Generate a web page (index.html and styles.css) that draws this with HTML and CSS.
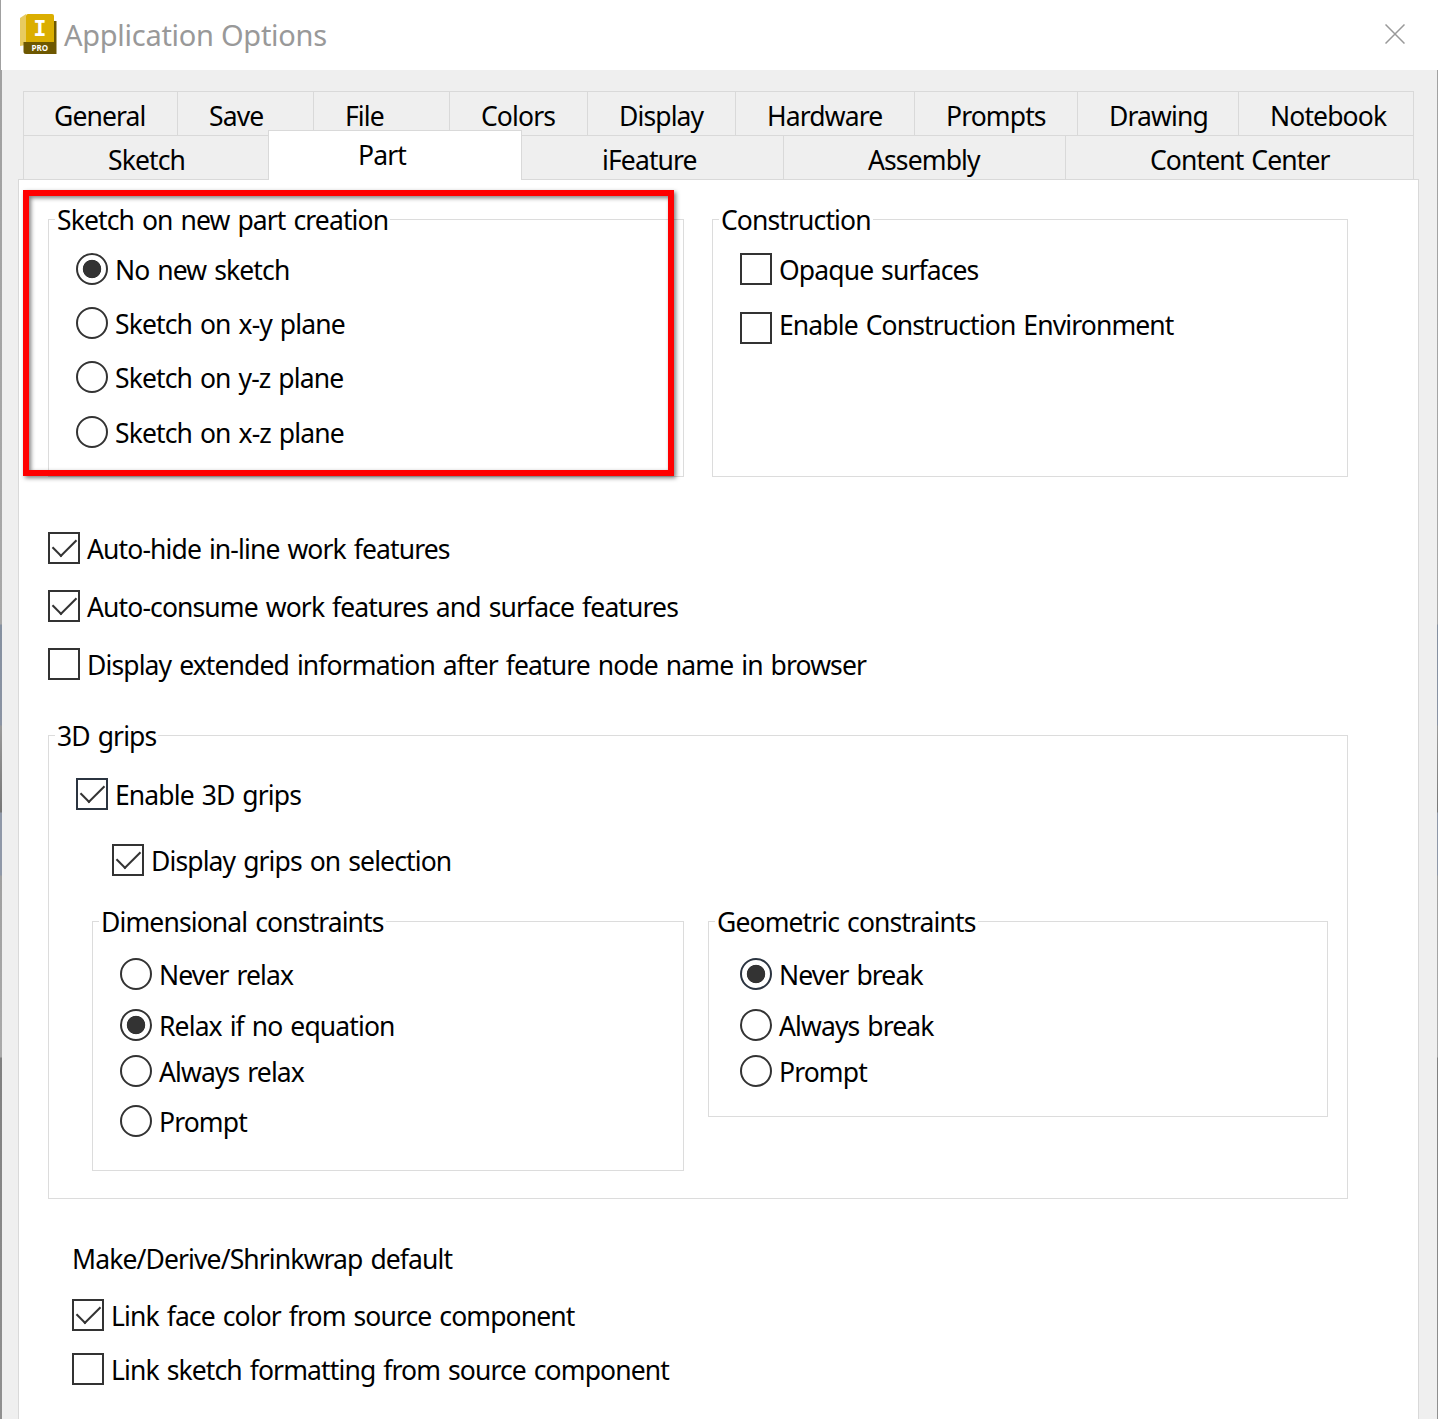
FILE: index.html
```html
<!DOCTYPE html>
<html lang="en">
<head>
	<meta charset="UTF-8">
	<meta name="viewport" content="width=device-width, initial-scale=1.0">
	<title>Application Options</title>
	<link rel="stylesheet" href="styles.css">
</head>
<body>
	<div class="window">
		<div class="titlebar">
			<svg class="logo" width="38" height="42" viewBox="0 0 38 42">
				<path d="M1 5 L7 1 V32 L1 33 Z" fill="#e8cb60"/>
				<path d="M4.500 29 H35 V8 H37.500 V41 H7 Q4.500 41 4.500 38.500 Z" fill="#6d5700"/>
				<path d="M7 3 Q7 1 9 1 H33 Q35 1 35 3 V29 H7 Z" fill="#dbae00"/>
				<text class="logo-letter" x="20.800" y="23" text-anchor="middle">I</text>
				<text class="logo-pro" x="20.800" y="37.800" text-anchor="middle">PRO</text>
			</svg>
			<span class="title">Application Options</span>
			<svg class="btn-close" width="20" height="20" viewBox="0 0 20 20">
				<path d="M0.500 0.500 L19.500 19.500 M19.500 0.500 L0.500 19.500"/>
			</svg>
		</div>

		<div class="tabs">
			<ul class="tab-row first">
				<li class="tab">General</li>
				<li class="tab">Save</li>
				<li class="tab">File</li>
				<li class="tab">Colors</li>
				<li class="tab">Display</li>
				<li class="tab">Hardware</li>
				<li class="tab">Prompts</li>
				<li class="tab">Drawing</li>
				<li class="tab">Notebook</li>
			</ul>
			<ul class="tab-row second">
				<li class="tab">Sketch</li>
				<li class="tab selected">Part</li>
				<li class="tab ifeature">iFeature</li>
				<li class="tab">Assembly</li>
				<li class="tab">Content Center</li>
			</ul>
		</div>

		<div class="panel">
			<div class="highlight"></div>
			<div class="columns top">
				<fieldset class="group">
					<legend>Sketch on new part creation</legend>
					<label class="option"><input type="radio" name="sketch" checked><span>No new sketch</span></label>
					<label class="option"><input type="radio" name="sketch"><span>Sketch on x-y plane</span></label>
					<label class="option"><input type="radio" name="sketch"><span>Sketch on y-z plane</span></label>
					<label class="option last"><input type="radio" name="sketch"><span>Sketch on x-z plane</span></label>
				</fieldset>
				<fieldset class="group construction">
					<legend>Construction</legend>
					<label class="option"><input type="checkbox"><span>Opaque surfaces</span></label>
					<label class="option raised"><input type="checkbox"><span>Enable Construction Environment</span></label>
				</fieldset>
			</div>

			<div class="features">
				<label class="option"><input type="checkbox" checked><span>Auto-hide in-line work features</span></label>
				<label class="option"><input type="checkbox" checked><span>Auto-consume work features and surface features</span></label>
				<label class="option"><input type="checkbox"><span>Display extended information after feature node name in browser</span></label>
			</div>

			<fieldset class="group grips">
				<legend>3D grips</legend>
				<label class="option"><input type="checkbox" class="focus" checked><span>Enable 3D grips</span></label>
				<label class="option sub"><input type="checkbox" checked><span>Display grips on selection</span></label>
				<div class="columns constraints">
					<fieldset class="group dimensional">
						<legend>Dimensional constraints</legend>
						<label class="option"><input type="radio" name="dim"><span>Never relax</span></label>
						<label class="option"><input type="radio" name="dim" checked><span>Relax if no equation</span></label>
						<label class="option"><input type="radio" name="dim"><span>Always relax</span></label>
						<label class="option"><input type="radio" name="dim"><span>Prompt</span></label>
					</fieldset>
					<fieldset class="group geometric">
						<legend>Geometric constraints</legend>
						<label class="option"><input type="radio" name="geo" class="focus" checked><span>Never break</span></label>
						<label class="option"><input type="radio" name="geo"><span>Always break</span></label>
						<label class="option"><input type="radio" name="geo"><span>Prompt</span></label>
					</fieldset>
				</div>
			</fieldset>

			<div class="derive">
				<p class="derive-title">Make/Derive/Shrinkwrap default</p>
				<label class="option"><input type="checkbox" checked><span>Link face color from source component</span></label>
				<label class="option"><input type="checkbox"><span>Link sketch formatting from source component</span></label>
			</div>
		</div>
	</div>
</body>
</html>
```
FILE: styles.css
```css
*{ box-sizing: border-box;}
body{
	margin: 0; height: 1419px; overflow: hidden; color: #000;
	font-family: "Noto Sans", sans-serif; font-size: 26.5px; line-height: 33px;
	letter-spacing: -.88px; word-spacing: 1.9px;
	/* strip of desktop showing beside the window */
	background: linear-gradient(#a0a0a0 0, #a8a8a8 624px, #8590a0 625px, #8a93a3 725px, #999 726px, #777 812px, #8f98a8 813px, #8f98a8 875px, #a0a0a0 876px, #aaa 1057px, #808080 1058px, #909090 1419px);
}
ul, p{ margin: 0; padding: 0; list-style: none;}

.window{
	height: 1419px; margin: 0 1px 0 2px; background: #efefef;
}
.titlebar{
	display: flex; align-items: center; height: 70px; margin: 0 -1px;
	padding: 0 33px 2px 18px; background: #fff;
}
.logo{ margin-right: 7px; letter-spacing: 0;}
.logo-letter{ font: bold 22px "DejaVu Sans Mono", monospace; fill: #fff;}
.logo-pro{ font: bold 8px "Open Sans", sans-serif; fill: #fff;}
.title{ flex: 1; font-size: 29px; letter-spacing: -.28px; word-spacing: 0; color: #999;}
.btn-close{ fill: none; stroke: #999; stroke-width: 1.500;}

/* tabs */
.tabs{ margin: 21px 23px 0 21px;}
.tab-row{ display: grid; height: 44px; border-left: 1px solid #d9d9d9;}
.first{ grid-template-columns: 154px 136px 136px 138px 148px 179px 163px 161px 1fr;}
.second{ grid-template-columns: 245px 253px 262px 282px 1fr;}
.tab{
	padding: 6px 0 0 31px; line-height: 37px; white-space: nowrap;
	border-top: 1px solid #d9d9d9; border-right: 1px solid #d9d9d9;
}
.first .tab:first-child{ padding-left: 30px;}
.second .tab{ padding-left: 84px;}
.second .ifeature{ padding-left: 80px;}
.second .selected{
	z-index: 1; margin: -5px 0 -1px -1px; padding: 6px 0 0 89px;
	border-left: 1px solid #d9d9d9; background: #fff;
}

.panel{
	position: relative; height: 1240px; margin: 0 18px 0 16px; padding: 23px 70px 0 29px;
	border: 1px solid #d9d9d9; border-bottom: 0; background: #fff;
}
.highlight{
	position: absolute; left: 4px; top: 10px; width: 651px; height: 286px;
	border: 6px solid #f00; filter: drop-shadow(2px 2px 2px rgba(0,0,0,.5));
}

.columns{ display: flex; align-items: flex-start;}
.top{ gap: 28px;}
.group{
	min-width: 0; margin: 0; padding: 17px 0 0 27px; border: 1px solid #dcdcdc;
}
.top .group{ width: 636px; height: 274px;}
.group legend{
	height: 33px; margin-left: -21px; padding: 0 2px; line-height: 35px; white-space: nowrap;
}

.option{
	display: flex; align-items: center; gap: 7px; height: 32px; margin-bottom: 22px; white-space: nowrap;
}
.option span{ padding-top: 2px;}
.option.last{ margin-top: 23px;}
.construction .option{ margin-bottom: 27px;}
.raised span{ margin-top: -8px;}

input{
	appearance: none; flex: none; width: 32px; height: 32px; margin: 0;
	border: 2px solid #333; background: #fff;
}
input[type=radio]{ border-radius: 50%;}
input[type=radio]:checked{ background: radial-gradient(circle, #333 8.800px, #fff 9.600px);}
input[type=checkbox]:checked::after{
	content: ''; display: block; width: 21px; height: 11px; margin: 4px 0 0 2.500px;
	border: solid #333; border-width: 0 0 2px 2px; transform: rotate(-45deg);
}
.focus{ border-color: #2b3440;}

.features{ margin-top: 55px;}
.features .option{ margin-bottom: 26px;}

.grips{ height: 480px; margin-top: 39px; padding-top: 26px;}
.grips .sub{ margin: 34px 0 29px 36px;}
.grips > .option{ margin-bottom: 0;}
.constraints{ gap: 24px; margin: 29px 0 0 16px;}
.constraints .group{ padding-top: 20px;}
.constraints .option{ margin-bottom: 19px;}
.constraints .option:nth-of-type(2){ margin-bottom: 14px;}
.constraints .option:nth-of-type(3){ margin-bottom: 18px;}
.dimensional{ width: 592px; height: 266px;}
.geometric{ width: 620px; height: 212px;}
.constraints .geometric{ padding-left: 31px;}
.geometric legend{ margin-left: -25px;}

.derive{ margin: 44px 0 0 24px;}
.derive-title{ margin-bottom: 23px;}
```
